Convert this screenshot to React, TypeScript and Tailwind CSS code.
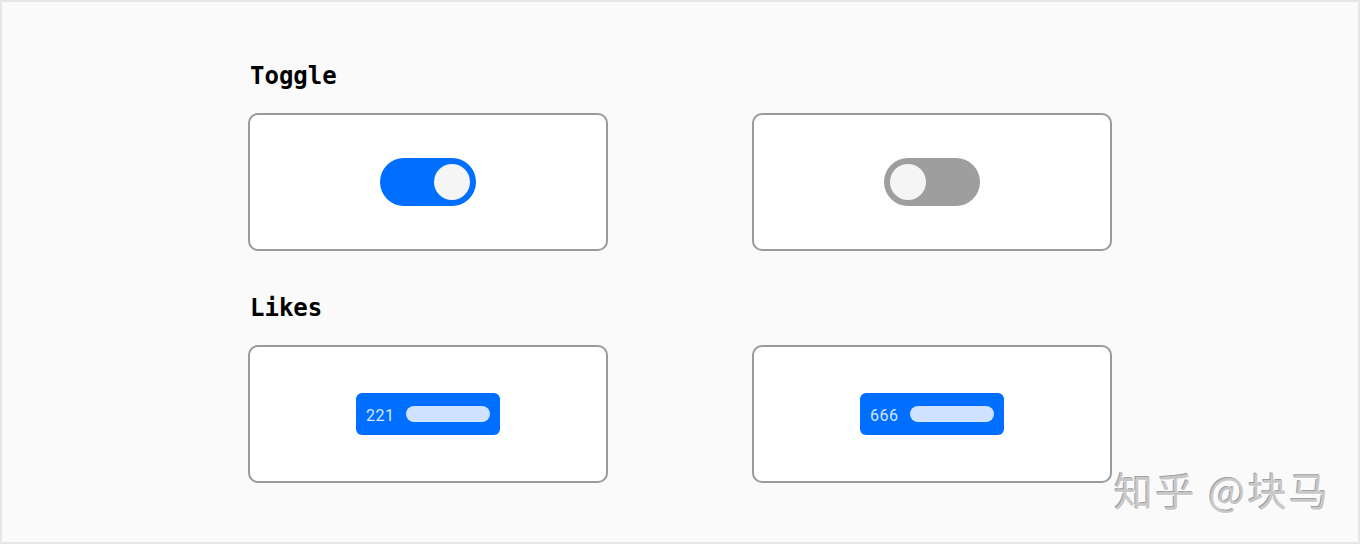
import React from "react";

function Card({ children }: { children: React.ReactNode }) {
  return (
    <div className="w-[360px] h-[138px] rounded-[10px] border-2 border-[#9a9a9a] bg-white flex items-center justify-center">
      {children}
    </div>
  );
}

function Toggle({ on }: { on: boolean }) {
  return (
    <div
      className={
        on
          ? "w-[96px] h-[48px] rounded-full bg-[#006eff] flex items-center justify-end px-[6px]"
          : "w-[96px] h-[48px] rounded-full bg-[#9e9e9e] flex items-center justify-start px-[6px]"
      }
    >
      <div className="w-[36px] h-[36px] rounded-full bg-[#f5f5f5]" />
    </div>
  );
}

function Like({ n }: { n: string }) {
  return (
    <div className="w-[144px] h-[42px] rounded-[6px] bg-[#006eff] flex items-center pl-[10px] pr-[10px] gap-[12px]">
      <span className="pt-[3px] text-[16px] text-[#d6e7ff] leading-none tracking-[0.5px]" style={{ fontFamily: "Roboto, 'Noto Sans', sans-serif" }}>{n}</span>
      <div className="flex-1 h-[16px] rounded-full bg-[#cfe2ff]" />
    </div>
  );
}

const mono = { fontFamily: "'DejaVu Sans Mono', 'Liberation Mono', monospace" };

export default function App() {
  return (
    <div className="w-[1360px] h-[544px] border-2 border-[#e6e6e6] bg-[#fafafa] relative overflow-hidden">
      <div className="pl-[246px] pt-[60px]">
        <h2 className="pl-[2px] text-[24px] font-bold leading-[28px] text-black mb-[23px]" style={mono}>Toggle</h2>
        <div className="flex gap-[144px]">
          <Card><Toggle on /></Card>
          <Card><Toggle on={false} /></Card>
        </div>
        <h2 className="pl-[2px] text-[24px] font-bold leading-[28px] text-black mt-[43px] mb-[23px]" style={mono}>Likes</h2>
        <div className="flex gap-[144px]">
          <Card><Like n="221" /></Card>
          <Card><Like n="666" /></Card>
        </div>
      </div>
      <div
        className="absolute left-[1112px] top-[468px] text-[39px] leading-none text-[#c8c8c8] tracking-[2.5px]"
        style={{ fontFamily: "'Noto Sans CJK SC', sans-serif", textShadow: "1px 1px 0 #ffffff, -1px -1px 0 #a0a0a0" }}
      >
        知乎 @块马
      </div>
    </div>
  );
}
